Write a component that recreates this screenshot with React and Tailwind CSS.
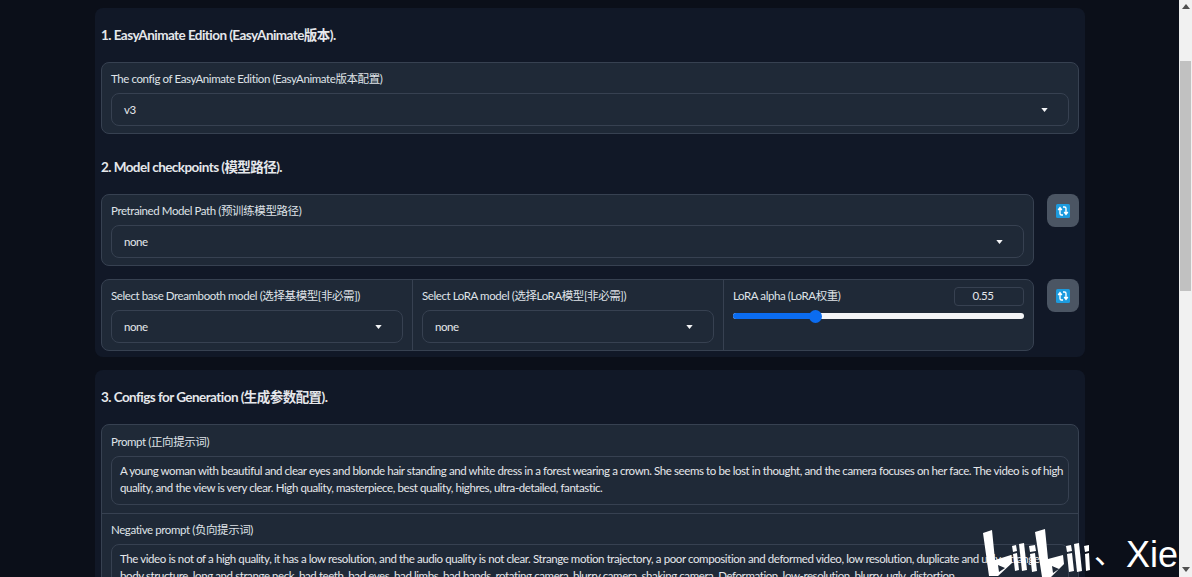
const sans = { fontFamily: 'Lato, "Noto Sans CJK SC", sans-serif' }

function Caret() {
  return (
    <svg width="7" height="4" viewBox="0 0 8 5" className="shrink-0">
      <path d="M0 0h8L4 5z" fill="#f3f4f6" />
    </svg>
  )
}

function Select({ value }) {
  return (
    <div className="flex h-[33px] items-center justify-between rounded-lg border border-[#374151] bg-[#1f2937] pl-[12px] pr-[20px] text-[#e5e7eb]">
      <span>{value}</span>
      <Caret />
    </div>
  )
}

function Label({ children }) {
  return <div className="mb-[3px] h-[22px] whitespace-nowrap leading-[22px] text-[#dfe3e8]">{children}</div>
}

function SelectBlock({ label, value, className = '' }) {
  return (
    <div className={`px-[9px] pt-[5px] ${className}`}>
      <Label>{label}</Label>
      <Select value={value} />
    </div>
  )
}

function RefreshButton() {
  return (
    <button className="flex h-[33px] w-[32px] shrink-0 items-center justify-center rounded-lg bg-[#4b5563]">
      <svg width="14" height="14" viewBox="0 0 14 14">
        <rect width="14" height="14" rx="1.500" fill="#1d9bde" />
        <path d="M4 5v4.500q0 1.500 1.500 1.500H7M10 9V4.500Q10 3 8.500 3H7M2.200 6 4 3.600 5.800 6M8.200 8 10 10.400 11.800 8" fill="none" stroke="#fff" strokeWidth="1.400" />
      </svg>
    </button>
  )
}

function Slider() {
  return (
    <div className="relative mt-[6px] h-[6px] rounded-full bg-[#f3f4f6]">
      <div className="h-full w-[83px] rounded-l-full bg-[#0b6cf0]" />
      <div className="absolute left-[76px] top-[-3.500px] h-[13px] w-[13px] rounded-full bg-[#0b6cf0]" />
    </div>
  )
}

function Prompt({ children }) {
  return (
    <div className="rounded-lg border border-[#374151] bg-[#1f2937] pb-[8px] pl-[8px] pr-[3px] pt-[6px] leading-[16.500px] text-[#e5e7eb]">
      {children}
    </div>
  )
}

function Watermark() {
  return (
    <div className="absolute bottom-0 right-[14px] flex h-[57px] items-end tracking-normal text-white">
      {/* bilibili logo, coords are page px */}
      <svg width="108" height="57" viewBox="982 520 108 57" fill="#fff" fillRule="evenodd">
        <path d="M982 533l9-3 3 30 16-5 1 8-14 13h-9zM997 565l1 7 6-4z" />
        <path d="M1011 546l4-1 1 6-4 1zM1012 554l4-1 2 17-4 1z" />
        <path d="M1018 544l5-1 3 27-5 1z" />
        <path d="M1028 546l6-1 1 6-6 1zM1029 554l5-1 2 18-5 1z" />
        <path d="M1034 532l10-3 3 30 15-4 1 9-13 13h-9zM1051 566l1 7 6-4z" />
        <path d="M1065 546l5-1 1 6-5 1zM1066 554l5-1 2 18-5 1z" />
        <path d="M1073 544l5-1 3 28-5 1z" />
        <path d="M1083 546l5-1v6l-4 1zM1084 554l4-1 1 17-4 1z" />
      </svg>
      <span className="mb-[12px] ml-[3px] w-[24px] text-[30px] leading-none" style={{ fontFamily: '"Noto Sans CJK SC", sans-serif' }}>、</span>
      <span className="mb-[4px] ml-[8px] text-[36px] leading-none" style={{ fontFamily: '"Liberation Sans", sans-serif' }}>Xie</span>
    </div>
  )
}

export default function App() {
  return (
    <div className="relative flex h-[577px] w-full overflow-hidden bg-[#0b0f19] text-[11.500px] tracking-[-0.41px]" style={sans}>
      <main className="flex min-w-0 flex-1 flex-col gap-[13px] pl-[95px] pr-[94px] pt-[8px]">
        <section className="rounded-lg bg-[#111827] px-[6px] pb-[6px]">
          <h2 className="flex h-[54px] items-center pt-[1px] text-[13.500px] font-bold tracking-[-0.55px] text-[#e5e7eb]">1. EasyAnimate Edition (EasyAnimate版本).</h2>
          <div className="h-[72px] rounded-lg border border-[#374151] bg-[#1f2937]">
            <SelectBlock label="The config of EasyAnimate Edition (EasyAnimate版本配置)" value="v3" />
          </div>
          <h2 className="mt-[20px] flex h-[27px] items-center text-[13.500px] font-bold tracking-[-0.55px] text-[#e5e7eb]">2. Model checkpoints (模型路径).</h2>
          <div className="mt-[13px] flex items-start gap-[13px]">
            <div className="h-[72px] flex-1 rounded-lg border border-[#374151] bg-[#1f2937]">
              <SelectBlock label="Pretrained Model Path (预训练模型路径)" value="none" />
            </div>
            <RefreshButton />
          </div>
          <div className="mt-[13px] flex items-start gap-[13px]">
            <div className="flex h-[72px] flex-1 rounded-lg border border-[#374151] bg-[#1f2937]">
              <SelectBlock className="w-[311px] border-r border-[#374151]" label="Select base Dreambooth model (选择基模型[非必需])" value="none" />
              <SelectBlock className="w-[311px] border-r border-[#374151]" label="Select LoRA model (选择LoRA模型[非必需])" value="none" />
              <div className="flex-1 px-[9px] pt-[5px]">
                <div className="flex items-center justify-between">
                  <span className="leading-[22px] text-[#dfe3e8]">LoRA alpha (LoRA权重)</span>
                  <span className="flex h-[19px] w-[70px] items-center justify-center rounded border border-[#374151] pr-[12px] text-[#e5e7eb]">0.55</span>
                </div>
                <Slider />
              </div>
            </div>
            <RefreshButton />
          </div>
        </section>
        <section className="flex-1 rounded-t-lg bg-[#111827] px-[6px]">
          <h2 className="flex h-[54px] items-center pt-[1px] text-[13.500px] font-bold tracking-[-0.55px] text-[#e5e7eb]">3. Configs for Generation (生成参数配置).</h2>
          <div className="rounded-lg border border-[#374151] bg-[#1f2937]">
            <div className="border-b border-[#374151] px-[9px] pb-[8px] pt-[6px]">
              <Label>Prompt (正向提示词)</Label>
              <Prompt>A young woman with beautiful and clear eyes and blonde hair standing and white dress in a forest wearing a crown. She seems to be lost in thought, and the camera focuses on her face. The video is of high quality, and the view is very clear. High quality, masterpiece, best quality, highres, ultra-detailed, fantastic.</Prompt>
            </div>
            <div className="px-[9px] pt-[5px]">
              <Label>Negative prompt (负向提示词)</Label>
              <Prompt>The video is not of a high quality, it has a low resolution, and the audio quality is not clear. Strange motion trajectory, a poor composition and deformed video, low resolution, duplicate and ugly, strange body structure, long and strange neck, bad teeth, bad eyes, bad limbs, bad hands, rotating camera, blurry camera, shaking camera. Deformation, low-resolution, blurry, ugly, distortion.</Prompt>
            </div>
          </div>
        </section>
      </main>
      <aside className="relative flex w-[13px] shrink-0 flex-col items-center bg-[#f1f1f1]">
        <svg width="8" height="5" viewBox="0 0 8 5" className="mt-[4px]"><path d="M0 5h8L4 0z" fill="#505050" /></svg>
        <div className="mt-[52px] h-[230px] w-[11px] bg-[#c1c1c1]" />
        <svg width="8" height="5" viewBox="0 0 8 5" className="mb-[5px] mt-auto"><path d="M0 0h8L4 5z" fill="#505050" /></svg>
      </aside>
      <Watermark />
    </div>
  )
}
